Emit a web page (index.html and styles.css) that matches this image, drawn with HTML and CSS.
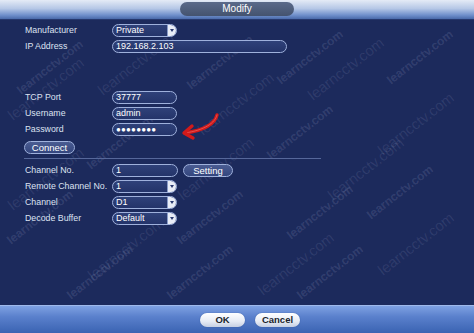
FILE: index.html
```html
<!doctype html>
<html lang="en">
<head>
<meta charset="utf-8">
<title>Modify</title>
<link rel="stylesheet" href="styles.css">
</head>
<body>
<div id="dlg">

	<div id="titlebar">
		<div class="titlepill">Modify</div>
	</div>

	<div id="content">
		<div class="row">
			<span class="lbl">Manufacturer</span>
			<span class="fld sel w65">Private<i class="drop"></i></span>
		</div>
		<div class="row">
			<span class="lbl">IP Address</span>
			<span class="fld w175">192.168.2.103</span>
		</div>

		<div class="row gapTop">
			<span class="lbl">TCP Port</span>
			<span class="fld w65">37777</span>
		</div>
		<div class="row">
			<span class="lbl">Username</span>
			<span class="fld w65">admin</span>
		</div>
		<div class="row">
			<span class="lbl">Password</span>
			<span class="fld w65 dots">&#9679;&#9679;&#9679;&#9679;&#9679;&#9679;&#9679;&#9679;</span>
		</div>
		<div class="row">
			<span class="btn connect">Connect</span>
		</div>

		<hr class="sep">

		<div class="row">
			<span class="lbl">Channel No.</span>
			<span class="fld w66">1</span>
			<span class="btn setting">Setting</span>
		</div>
		<div class="row">
			<span class="lbl">Remote Channel No.</span>
			<span class="fld sel w65">1<i class="drop"></i></span>
		</div>
		<div class="row">
			<span class="lbl">Channel</span>
			<span class="fld sel w65">D1<i class="drop"></i></span>
		</div>
		<div class="row">
			<span class="lbl">Decode Buffer</span>
			<span class="fld sel w65">Default<i class="drop"></i></span>
		</div>

		<!-- red arrow pointing at password -->
		<svg id="arrow" width="50" height="30" viewBox="0 0 50 30">
			<path d="M38 2 C36 10 26 17 6 20" fill="none" stroke="#d21a1a" stroke-width="3.4" stroke-linecap="round"/>
			<path d="M38 2 C36 10 26 17 6 20" fill="none" stroke="#f07070" stroke-width="1" stroke-linecap="round" opacity="0.6"/>
			<path d="M13 13 L5 20 L14 25" fill="none" stroke="#d21a1a" stroke-width="3.4" stroke-linecap="round" stroke-linejoin="round"/>
		</svg>

		<div id="marks">
			<span style="left:0px;top:60px">learncctv.com</span>
			<span style="left:90px;top:35px">learncctv.com</span>
			<span style="left:190px;top:75px">learncctv.com</span>
			<span style="left:300px;top:40px">learncctv.com</span>
			<span style="left:370px;top:95px">learncctv.com</span>
			<span style="left:0px;top:150px">learncctv.com</span>
			<span style="left:170px;top:140px">learncctv.com</span>
			<span style="left:320px;top:140px">learncctv.com</span>
			<span style="left:80px;top:220px">learncctv.com</span>
			<span style="left:250px;top:235px">learncctv.com</span>
			<span style="left:370px;top:215px">learncctv.com</span>
			<span class="b" style="left:10px;top:40px">learncctv.com</span>
			<span class="b" style="left:180px;top:35px">learncctv.com</span>
			<span class="b" style="left:270px;top:30px">learncctv.com</span>
			<span class="b" style="left:380px;top:30px">learncctv.com</span>
			<span class="b" style="left:80px;top:115px">learncctv.com</span>
			<span class="b" style="left:260px;top:105px">learncctv.com</span>
			<span class="b" style="left:0px;top:190px">learncctv.com</span>
			<span class="b" style="left:170px;top:190px">learncctv.com</span>
			<span class="b" style="left:280px;top:185px">learncctv.com</span>
			<span class="b" style="left:360px;top:165px">learncctv.com</span>
			<span class="b" style="left:60px;top:245px">learncctv.com</span>
			<span class="b" style="left:160px;top:245px">learncctv.com</span>
			<span class="b" style="left:290px;top:245px">learncctv.com</span>
		</div>
	</div>

	<div id="footer">
		<span class="wbtn">OK</span>
		<span class="wbtn">Cancel</span>
	</div>

</div>
</body>
</html>
```

FILE: styles.css
```css
* { margin: 0; padding: 0; box-sizing: border-box; }
html, body { width: 474px; height: 333px; overflow: hidden; }

body {
	font-family: "Liberation Sans", Arial, sans-serif;
	font-size: 9px;
	background: #1c295c;
}

#dlg {
	width: 474px; height: 333px;
	display: flex; flex-direction: column;
}

#titlebar {
	height: 20px;
	display: flex; justify-content: center; align-items: flex-start;
	padding-top: 2px;
	background: linear-gradient(#e4ebf6, #b5c7e6 45%, #6f8fcb 80%, #4a6aaa);
	border-bottom: 1px solid #26386e;
}
.titlepill {
	width: 114px; height: 14px;
	border-radius: 7px;
	background: linear-gradient(#5a6a8a, #44536f);
	color: #fff;
	text-align: center;
	line-height: 14px;
	font-size: 10px;
}

#content {
	flex: 1;
	position: relative;
	padding: 2px 0 0 24px;
	background: #1c2a5c;
	color: #dde2f1;
	overflow: hidden;
}

.row {
	height: 16px;
	display: flex; align-items: center;
	position: relative; z-index: 2;
	white-space: nowrap;
}
.row.gapTop { margin-top: 35px; }
.lbl { width: 88px; padding-left: 1px; font-size: 8.8px; }

.fld {
	height: 13px;
	border: 1px solid #9fb1dc;
	border-radius: 7px;
	background: linear-gradient(#2f4179, #24346a);
	color: #fff;
	padding-left: 3px;
	line-height: 11px;
	font-size: 9px;
	position: relative;
	overflow: hidden;
}
.w65 { width: 65px; }
.w66 { width: 66px; }
.w175 { width: 175px; }

.dots {
	font-size: 8px;
	letter-spacing: 0.2px;
	padding-left: 3px;
}

.sel .drop {
	position: absolute;
	right: 0; top: 0; bottom: 0;
	width: 9px;
	background: #e9edf7;
	border-left: 1px solid #8a9cc8;
}
.sel .drop::after {
	content: "";
	position: absolute;
	left: 2px; top: 4px;
	border-left: 2px solid transparent;
	border-right: 2px solid transparent;
	border-top: 3px solid #2a3a70;
}

.btn {
	height: 13px;
	border: 1px solid #9fb1dc;
	border-radius: 7px;
	background: linear-gradient(#4a5c92, #34467e);
	color: #fff;
	text-align: center;
	line-height: 11px;
	font-size: 9.5px;
}
.connect { width: 51px; margin-top: 4px; }
.setting { width: 50px; margin-left: 5px; }

.sep {
	border: none;
	height: 1px;
	width: 297px;
	background: #56679a;
	margin: 5px 0 3px 0;
	position: relative; z-index: 2;
}

#arrow {
	position: absolute;
	left: 179px; top: 93px;
	z-index: 3;
}

#marks {
	position: absolute;
	top: 0; left: 0; right: 0; bottom: 0;
	z-index: 1;
}
#marks span {
	position: absolute;
	transform: rotate(-38deg);
	font-size: 15px;
	color: rgba(190, 200, 230, 0.12);
	white-space: nowrap;
}
#marks span.b {
	font-weight: bold;
	font-size: 12px;
	color: rgba(190, 200, 230, 0.15);
}

#footer {
	height: 28px;
	display: flex; justify-content: center; align-items: center;
	gap: 10px;
	padding-left: 26px;
	background: linear-gradient(#7ea1e2, #5a80cc 40%, #3a63b2);
	border-top: 1px solid #9fb9ea;
}
.wbtn {
	width: 45px; height: 14px;
	border-radius: 7px;
	background: linear-gradient(#ffffff, #e6ebf4 60%, #c5cfe2);
	color: #1a1f2c;
	font-weight: bold;
	font-size: 9.5px;
	line-height: 14px;
	text-align: center;
	box-shadow: 0 0 1px #284a8c;
}
```
